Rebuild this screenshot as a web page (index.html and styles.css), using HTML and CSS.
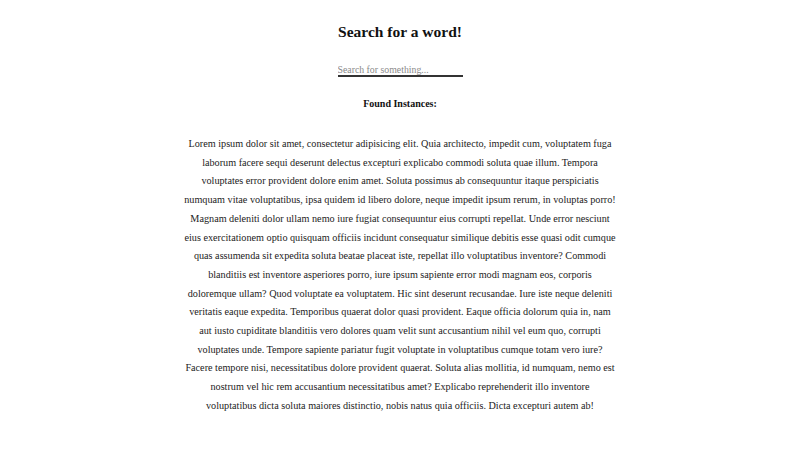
FILE: index.html
```html
<!DOCTYPE html>
<html>
<head>
<meta charset="utf-8">
<link rel="stylesheet" href="styles.css">
</head>
<body>
<main class="page">
  <h1 class="title">Search for a word!</h1>
  <input class="search" type="text" placeholder="Search for something...">
  <h2 class="found">Found Instances:</h2>
  <p class="text">Lorem ipsum dolor sit amet, consectetur adipisicing elit. Quia architecto, impedit cum, voluptatem fuga<br>
laborum facere sequi deserunt delectus excepturi explicabo commodi soluta quae illum. Tempora<br>
voluptates error provident dolore enim amet. Soluta possimus ab consequuntur itaque perspiciatis<br>
numquam vitae voluptatibus, ipsa quidem id libero dolore, neque impedit ipsum rerum, in voluptas porro!<br>
Magnam deleniti dolor ullam nemo iure fugiat consequuntur eius corrupti repellat. Unde error nesciunt<br>
eius exercitationem optio quisquam officiis incidunt consequatur similique debitis esse quasi odit cumque<br>
quas assumenda sit expedita soluta beatae placeat iste, repellat illo voluptatibus inventore? Commodi<br>
blanditiis est inventore asperiores porro, iure ipsum sapiente error modi magnam eos, corporis<br>
doloremque ullam? Quod voluptate ea voluptatem. Hic sint deserunt recusandae. Iure iste neque deleniti<br>
veritatis eaque expedita. Temporibus quaerat dolor quasi provident. Eaque officia dolorum quia in, nam<br>
aut iusto cupiditate blanditiis vero dolores quam velit sunt accusantium nihil vel eum quo, corrupti<br>
voluptates unde. Tempore sapiente pariatur fugit voluptate in voluptatibus cumque totam vero iure?<br>
Facere tempore nisi, necessitatibus dolore provident quaerat. Soluta alias mollitia, id numquam, nemo est<br>
nostrum vel hic rem accusantium necessitatibus amet? Explicabo reprehenderit illo inventore<br>
voluptatibus dicta soluta maiores distinctio, nobis natus quia officiis. Dicta excepturi autem ab!</p>
</main>
</body>
</html>
```
FILE: styles.css
```css
html, body {
  margin: 0;
  padding: 0;
  background: #ffffff;
}
body {
  font-family: "Liberation Serif", serif;
  color: #111111;
}
.page {
  display: flex;
  flex-direction: column;
  align-items: center;
  padding-top: 21px;
}
.title {
  margin: 0;
  font-size: 15.5px;
  font-weight: bold;
  line-height: 22px;
}
.search {
  margin-top: 21px;
  width: 125px;
  border: none;
  border-bottom: 2px solid #333333;
  padding: 0;
  font-family: "Liberation Serif", serif;
  font-size: 9.8px;
  outline: none;
  background: transparent;
}
.search::placeholder {
  color: #8a8a8a;
}
.found {
  margin: 20px 0 0 0;
  font-size: 10px;
  font-weight: bold;
  line-height: 14px;
}
.text {
  margin: 24px 0 0 0;
  width: 470px;
  text-align: center;
  font-size: 10.2px;
  line-height: 18.7px;
  color: #222222;
}
```
